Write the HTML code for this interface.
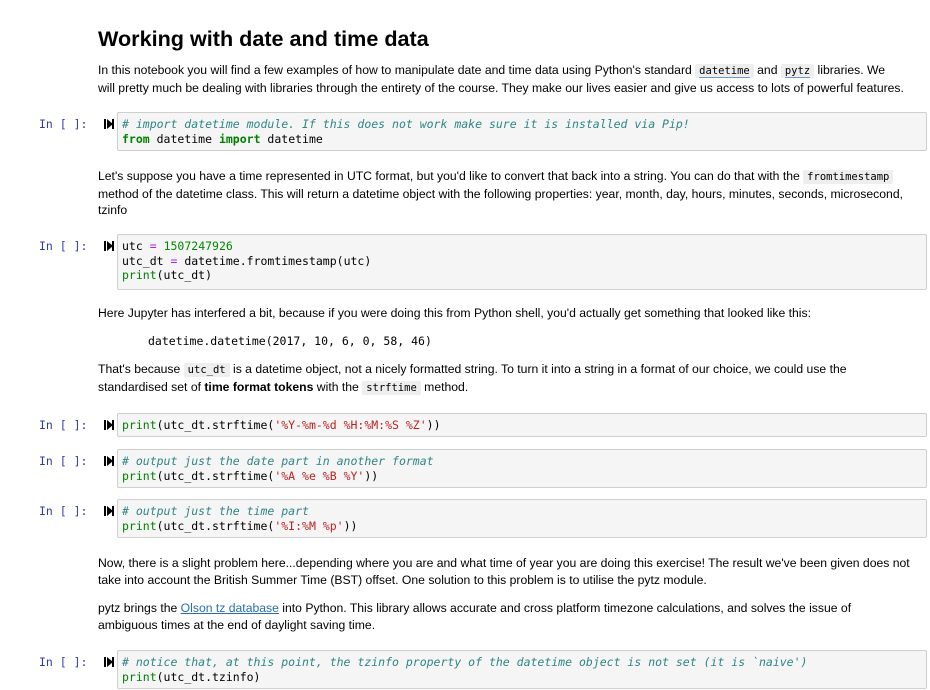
<!DOCTYPE html>
<html><head><meta charset="utf-8"><style>
body{margin:0;width:930px;height:690px;background:#fff;position:relative;overflow:hidden;font-family:"Liberation Sans",Arial,sans-serif;color:#000}
.a{position:absolute}
.t{position:absolute;left:98px;font-size:12.2px;line-height:16.5px;width:830px;white-space:nowrap}
.p{position:absolute;left:39px;font-family:"DejaVu Sans Mono","Liberation Mono",monospace;font-size:11.5px;color:#303F9F}
.r{position:absolute;left:104px;width:10px;height:12px}
.box{position:absolute;left:117px;width:808px;background:#f5f5f5;border:1px solid #cfcfcf;border-radius:2px}
.code{position:absolute;left:122px;font-family:"DejaVu Sans Mono","Liberation Mono",monospace;font-size:11.5px;line-height:14.5px;white-space:pre;color:#000}
.c{color:#2f8585;font-style:italic}
.k{color:#008000;font-weight:bold}
.b{color:#008000}
.o{color:#AA22FF}
.n{color:#080}
.s{color:#BA2121}
code{font-family:"DejaVu Sans Mono","Liberation Mono",monospace;font-size:10.5px;background:#eee;padding:1px 4px;border-radius:2px}
a{color:#296eaa}
</style></head><body>
<div class="a" style="left:98px;top:26px;font-size:21.6px;font-weight:bold">Working with date and time data</div>
<div class="t" style="top:62px">In this notebook you will find a few examples of how to manipulate date and time data using Python's standard <code><span style="border-bottom:1px solid #6a9bd0">datetime</span></code> and <code><span style="border-bottom:1px solid #6a9bd0">pytz</span></code> libraries. We<br>will pretty much be dealing with libraries through the entirety of the course. They make our lives easier and give us access to lots of powerful features.</div>

<div class="p" style="top:117px">In [ ]:</div><svg class="r" style="top:118px" viewBox="0 0 10 12"><rect x="0" y="1" width="2" height="10"/><path d="M3 1L9 6L3 11Z"/><rect x="8" y="1" width="2" height="10"/></svg>
<div class="box" style="top:112px;height:37px"></div>
<div class="code" style="top:117px"><span class="c"># import datetime module. If this does not work make sure it is installed via Pip!</span>
<span class="k">from</span> datetime <span class="k">import</span> datetime</div>

<div class="t" style="top:168px">Let's suppose you have a time represented in UTC format, but you'd like to convert that back into a string. You can do that with the <code>fromtimestamp</code><br>method of the datetime class. This will return a datetime object with the following properties: year, month, day, hours, minutes, seconds, microsecond,<br>tzinfo</div>

<div class="p" style="top:239px">In [ ]:</div><svg class="r" style="top:240px" viewBox="0 0 10 12"><rect x="0" y="1" width="2" height="10"/><path d="M3 1L9 6L3 11Z"/><rect x="8" y="1" width="2" height="10"/></svg>
<div class="box" style="top:234px;height:54px"></div>
<div class="code" style="top:239px">utc <span class="o">=</span> <span class="n">1507247926</span>
utc_dt <span class="o">=</span> datetime.fromtimestamp(utc)
<span class="b">print</span>(utc_dt)</div>

<div class="t" style="top:305px">Here Jupyter has interfered a bit, because if you were doing this from Python shell, you'd actually get something that looked like this:</div>
<div class="code" style="left:148px;top:334px">datetime.datetime(2017, 10, 6, 0, 58, 46)</div>
<div class="t" style="top:361px">That's because <code>utc_dt</code> is a datetime object, not a nicely formatted string. To turn it into a string in a format of our choice, we could use the<br>standardised set of <b>time format tokens</b> with the <code>strftime</code> method.</div>

<div class="p" style="top:418px">In [ ]:</div><svg class="r" style="top:419px" viewBox="0 0 10 12"><rect x="0" y="1" width="2" height="10"/><path d="M3 1L9 6L3 11Z"/><rect x="8" y="1" width="2" height="10"/></svg>
<div class="box" style="top:413px;height:22px"></div>
<div class="code" style="top:418px"><span class="b">print</span>(utc_dt.strftime(<span class="s">'%Y-%m-%d %H:%M:%S %Z'</span>))</div>

<div class="p" style="top:454px">In [ ]:</div><svg class="r" style="top:455px" viewBox="0 0 10 12"><rect x="0" y="1" width="2" height="10"/><path d="M3 1L9 6L3 11Z"/><rect x="8" y="1" width="2" height="10"/></svg>
<div class="box" style="top:449px;height:37px"></div>
<div class="code" style="top:454px"><span class="c"># output just the date part in another format</span>
<span class="b">print</span>(utc_dt.strftime(<span class="s">'%A %e %B %Y'</span>))</div>

<div class="p" style="top:504px">In [ ]:</div><svg class="r" style="top:505px" viewBox="0 0 10 12"><rect x="0" y="1" width="2" height="10"/><path d="M3 1L9 6L3 11Z"/><rect x="8" y="1" width="2" height="10"/></svg>
<div class="box" style="top:499px;height:37px"></div>
<div class="code" style="top:504px"><span class="c"># output just the time part</span>
<span class="b">print</span>(utc_dt.strftime(<span class="s">'%I:%M %p'</span>))</div>

<div class="t" style="top:555px">Now, there is a slight problem here...depending where you are and what time of year you are doing this exercise! The result we've been given does not<br>take into account the British Summer Time (BST) offset. One solution to this problem is to utilise the pytz module.</div>
<div class="t" style="top:600px">pytz brings the <a style="text-decoration:underline">Olson tz database</a> into Python. This library allows accurate and cross platform timezone calculations, and solves the issue of<br>ambiguous times at the end of daylight saving time.</div>

<div class="p" style="top:655px">In [ ]:</div><svg class="r" style="top:656px" viewBox="0 0 10 12"><rect x="0" y="1" width="2" height="10"/><path d="M3 1L9 6L3 11Z"/><rect x="8" y="1" width="2" height="10"/></svg>
<div class="box" style="top:650px;height:37px"></div>
<div class="code" style="top:655px"><span class="c"># notice that, at this point, the tzinfo property of the datetime object is not set (it is `naive')</span>
<span class="b">print</span>(utc_dt.tzinfo)</div>
</body></html>
